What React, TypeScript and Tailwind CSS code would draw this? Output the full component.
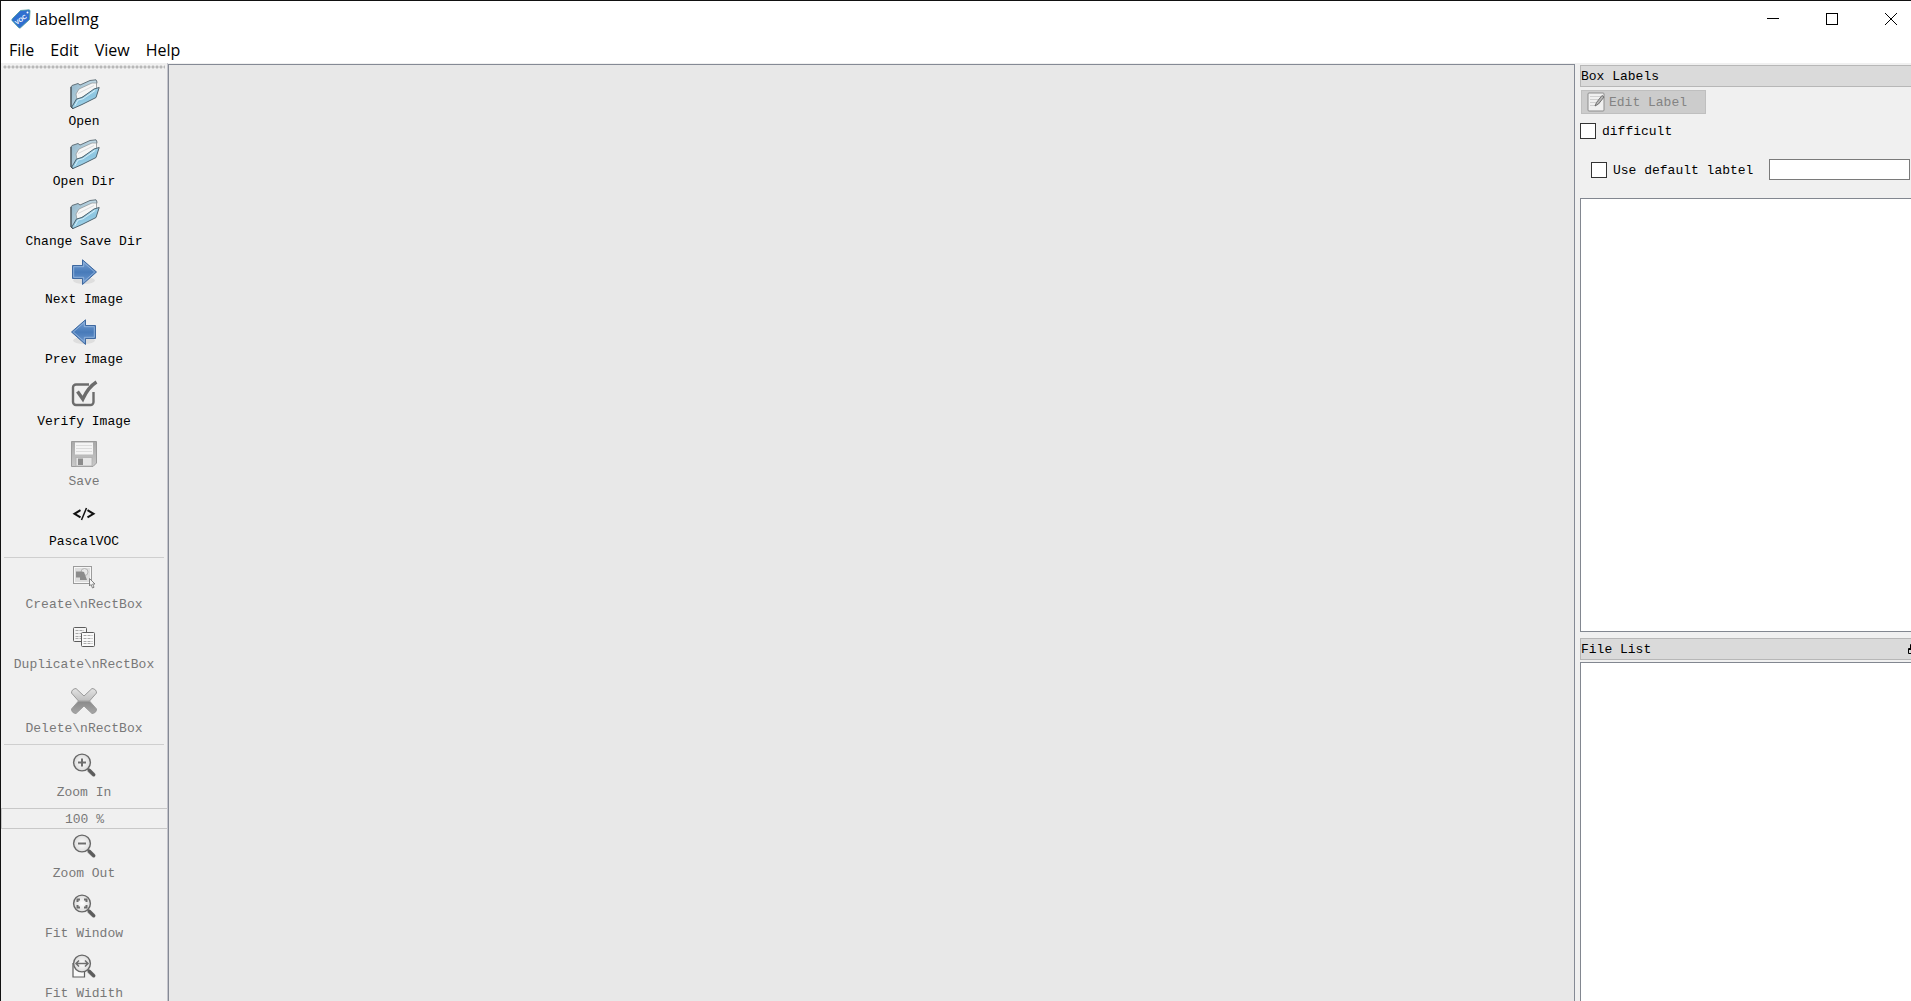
import type { ReactNode } from "react";

type ToolItemProps = {
    label: string;
    icon: ReactNode;
    // 上の余白
    space?: string;
    disabled?: boolean;
}

function ToolItem({ label, icon, space = "pt-2.5", disabled = false }: ToolItemProps) {
    return (
        <button type="button" disabled={disabled} className={`flex w-full flex-col items-center gap-1 text-black disabled:text-[#787878] ${space}`}>
            <span className="flex h-[30px] items-center justify-center">{icon}</span>
            <span className="h-4 leading-[18px] whitespace-pre">{label}</span>
        </button>
    )
}

function Separator() {
    return <div className="mx-[3px] mt-2 h-px shrink-0 bg-[#cfcfcf]" />
}

// グラデーションはまとめてここで定義
function Gradients() {
    return (
        <svg width="0" height="0" className="absolute" aria-hidden="true">
            <defs>
                <linearGradient id="folderBack" x1="0" y1="0" x2="1" y2="0.6">
                    <stop offset="0" stopColor="#8fb4c8" />
                    <stop offset="1" stopColor="#d3e6ef" />
                </linearGradient>
                <linearGradient id="folderFront" x1="0" y1="0" x2="0.4" y2="1">
                    <stop offset="0" stopColor="#b9e3f4" />
                    <stop offset="0.6" stopColor="#8cc5e0" />
                    <stop offset="1" stopColor="#a9d8ec" />
                </linearGradient>
                <linearGradient id="arrow" x1="0" y1="0" x2="0" y2="1">
                    <stop offset="0" stopColor="#7ba3d4" />
                    <stop offset="0.5" stopColor="#477ab9" />
                    <stop offset="1" stopColor="#739dd2" />
                </linearGradient>
                <linearGradient id="cross" x1="0" y1="0" x2="0" y2="1">
                    <stop offset="0" stopColor="#e4e4e4" />
                    <stop offset="0.45" stopColor="#c2c2c2" />
                    <stop offset="0.55" stopColor="#8c8c8c" />
                    <stop offset="1" stopColor="#a6a6a6" />
                </linearGradient>
                <linearGradient id="disk" x1="0" y1="0" x2="0" y2="1">
                    <stop offset="0" stopColor="#a8a8a8" />
                    <stop offset="1" stopColor="#c9c9c9" />
                </linearGradient>
                <radialGradient id="lens">
                    <stop offset="0" stopColor="#ffffff" />
                    <stop offset="1" stopColor="#dcdcdc" />
                </radialGradient>
            </defs>
        </svg>
    )
}

function FolderIcon() {
    return (
        <svg width="30" height="30" viewBox="0 0 30 30" className="ml-0.5">
            <path d="M1 8 L2 6.500 L8 4.500 L10 6 L20 1.500 L26 .8 L27 3 L24 14 L3 29.500 L1 28Z" fill="url(#folderBack)" stroke="#64727a" strokeWidth="1" />
            <path d="M6 15 L9 10 L22 4 L26.500 4 L26.500 10 L7 21Z" fill="#f6f6f6" stroke="#8b8f92" strokeWidth=".7" />
            <path d="M8 14.500 L24 6.500" stroke="#cfd2d4" strokeWidth=".8" />
            <path d="M1.500 28.500 L6.500 20 L12 18.500 L24 10 L29.200 8.500 L26 18.500 L12 25.500 L3 29.500Z" fill="url(#folderFront)" stroke="#4f6470" strokeWidth="1" />
            <path d="M5 26.500 L8 21 L13 19.800 L25 11.500" fill="none" stroke="#dff4fc" strokeWidth=".9" />
            <path d="M1 8 V28 L3 29.500" fill="none" stroke="#3f474c" strokeWidth="1" />
        </svg>
    )
}

function ArrowIcon({ flip = false }: { flip?: boolean }) {
    return (
        <svg width="28" height="28" viewBox="0 0 28 28" className={flip ? "-scale-x-100" : ""}>
            <ellipse cx="14" cy="22.500" rx="11" ry="3.500" fill="#dedede" />
            <path d="M2.500 7.500 H12.500 V1.800 L26.500 14 L12.500 26.500 V20.500 H2.500Z" fill="url(#arrow)" stroke="#3f69a0" />
            <path d="M3.700 8.700 H13.700 V4.400 L24.700 14 L13.700 23.700 V19.300 H3.700Z" fill="none" stroke="#94b5de" strokeWidth=".9" />
        </svg>
    )
}

function VerifyIcon() {
    return (
        <svg width="28" height="28" viewBox="0 0 28 28" fill="none" stroke="#6c6c6c">
            <path d="M19 4.500 H6 a3 3 0 0 0 -3 3 V22 a3 3 0 0 0 3 3 H20.500 a3 3 0 0 0 3 -3 V12" strokeWidth="2.400" />
            <path d="M7.500 11.500 L12.800 19 C16 12 20 6 26.500 2" strokeWidth="3.400" />
        </svg>
    )
}

function SaveIcon() {
    return (
        <svg width="28" height="28" viewBox="0 0 28 28">
            <path d="M1.500 1.500 H26.500 V23 L23 26.500 H1.500Z" fill="url(#disk)" stroke="#9b9b9b" />
            <rect x="5" y="2.500" width="18" height="12" fill="#f4f4f4" />
            <path d="M6 5.500 H22 M6 8.500 H22 M6 11.500 H22" stroke="#dcdcdc" />
            <rect x="6" y="17.500" width="16" height="8.500" fill="#e6e6e6" stroke="#b0b0b0" strokeWidth=".8" />
            <rect x="8" y="18.500" width="5" height="6.500" fill="#8c8c8c" />
        </svg>
    )
}

function CodeIcon() {
    return (
        <svg width="24" height="14" viewBox="0 0 24 14" fill="none" stroke="#111111" className="mb-px">
            <path d="M8.500 3.200 L2.500 6.800 L8.500 10.400 M15.500 3.200 L21.500 6.800 L15.500 10.400" strokeWidth="2" />
            <path d="M14.500 1 L9.500 13" strokeWidth="1.500" />
        </svg>
    )
}

function CreateIcon() {
    return (
        <svg width="24" height="24" viewBox="0 0 24 24">
            <rect x="1.500" y="1.500" width="18" height="17" fill="#f7f7f7" />
            <rect x="1.500" y="1.500" width="18" height="17" fill="none" stroke="#444444" strokeDasharray="1 1" />
            <rect x="3" y="3" width="15" height="14" fill="#dedede" />
            <circle cx="12.500" cy="7" r="3.500" fill="#e8e8e8" stroke="#b5b5b5" />
            <path d="M4 6.500 H10 L12 7 L15 15 H8 V12.500 H4Z" fill="#8c8c8c" />
            <path d="M17.500 13.500 V21 L19 19.500 L20.500 23 L22 22.300 L20.700 19 H23Z" fill="#f4f4f4" stroke="#777777" strokeWidth=".9" />
        </svg>
    )
}

function CopyIcon() {
    return (
        <svg width="24" height="22" viewBox="0 0 24 22" stroke="#5c5c5c">
            <rect x="1.500" y="1.500" width="13" height="14" rx="1" fill="#f4f4f4" />
            <path d="M3.500 4.500 H12 M3.500 7.500 H9 M3.500 10.500 H9 M3.500 12.500 H9" stroke="#aaaaaa" strokeDasharray="3 1" />
            <rect x="9.500" y="6.500" width="13" height="14" rx="1" fill="#fafafa" />
            <path d="M11.500 9.500 H20.500 M11.500 12.500 H20.500 M11.500 15.500 H20.500 M11.500 17.500 H20.500" stroke="#aaaaaa" strokeDasharray="3 1" />
        </svg>
    )
}

function DeleteIcon() {
    return (
        <svg width="28" height="28" viewBox="0 0 28 28">
            <path d="M6 1.500 L14 9 L22 1.500 Q26.500 2 26.500 6 L19.500 14 L26.500 22 Q26.500 26 22 26.500 L14 19 L6 26.500 Q1.500 26 1.500 22 L8.500 14 L1.500 6 Q1.500 2 6 1.500Z" fill="url(#cross)" stroke="#9a9a9a" />
        </svg>
    )
}

function LensIcon({ children, page = false }: { children: ReactNode; page?: boolean }) {
    return (
        <svg width="24" height="24" viewBox="0 0 24 24" fill="none">
            {page && <path d="M1 9 V23 H12.500 V14" fill="#fafafa" stroke="#5e5e5e" strokeWidth="1.200" />}
            <path d="M16 16.500 L22 22" stroke="#b5b5b5" strokeWidth="4" />
            <path d="M15.500 15.500 L17.500 17.500" stroke="#777777" strokeWidth="2" />
            <path d="M17.500 17.500 L21.800 21.800" stroke="#5c5c5c" strokeWidth="3.200" strokeLinecap="round" />
            <circle cx="10" cy="9.500" r="8.400" fill="url(#lens)" stroke="#686868" strokeWidth="1.400" />
            {children}
        </svg>
    )
}

function EditIcon() {
    return (
        <svg width="18" height="20" viewBox="0 0 18 20">
            <rect x="1" y="1" width="16" height="18" rx="1" fill="#f0f0f0" stroke="#8e8e8e" />
            <path d="M3 4.500 H14 M3 7.500 H12 M3 10.500 H9 M3 13.500 H8" stroke="#d0d0d0" />
            <path d="M8 14 L9.500 10.500 L15 3.500 L17 5 L11.500 12Z" fill="#b5b5b5" stroke="#666666" strokeWidth=".9" />
        </svg>
    )
}

function TagIcon() {
    return (
        <svg width="20" height="20" viewBox="0 0 20 20">
            <path d="M9.500 1.500 L18 .8 Q19 .8 19 2 L18.500 10.500 L9.500 18.800 Q8.500 19.500 7.500 18.500 L1 11.500 Q.5 10.500 1.500 9.500Z" fill="#2f6fd0" stroke="#4a9a9c" strokeWidth=".8" />
            <circle cx="16.500" cy="3.500" r="1" fill="#ffffff" />
            <text x="9.500" y="12.500" textAnchor="middle" fontSize="6" fontWeight="700" fontFamily="Liberation Sans, sans-serif" fill="#ffffff" transform="rotate(-35 10 10)">VOC</text>
        </svg>
    )
}

function DockTitle({ title, children }: { title: string; children?: ReactNode }) {
    return (
        <div className="flex h-[22px] shrink-0 items-center justify-between border border-r-0 border-[#b7b7b7] bg-[#dadada]">
            <h2 className="pt-0.5">{title}</h2>
            {children}
        </div>
    )
}

const checkStyle = "size-4 appearance-none border border-[#333333] bg-white checked:bg-[#333333]";

export default function App() {
    return (
        <div className="flex min-h-screen flex-col overflow-hidden border-t border-l border-[#111111] bg-[#f0f0f0] font-['Liberation_Mono','Noto_Sans_CJK_SC',monospace] text-[13px] leading-4 text-black">
            <Gradients />
            {/* タイトルバー */}
            <header className="flex h-9 items-center justify-between bg-white pl-2.5 font-['Open_Sans','Noto_Sans',sans-serif] text-base">
                <div className="flex items-center gap-1">
                    <TagIcon />
                    <h1>labelImg</h1>
                </div>
                <div className="flex items-center gap-[47px] pr-3.5">
                    <button type="button" aria-label="Minimize">
                        <svg width="12" height="12" viewBox="0 0 12 12" stroke="#000000"><path d="M0 5.500 H12" /></svg>
                    </button>
                    <button type="button" aria-label="Maximize">
                        <svg width="12" height="12" viewBox="0 0 12 12" fill="none" stroke="#000000"><rect x=".5" y=".5" width="11" height="11" /></svg>
                    </button>
                    <button type="button" aria-label="Close">
                        <svg width="12" height="12" viewBox="0 0 12 12" stroke="#000000"><path d="M0 0 L12 12 M12 0 L0 12" /></svg>
                    </button>
                </div>
            </header>
            {/* メニュー */}
            <nav className="flex h-[26px] items-center gap-4 bg-white pl-2 font-['Open_Sans','Noto_Sans',sans-serif] text-base">
                <button type="button">File</button>
                <button type="button">Edit</button>
                <button type="button">View</button>
                <button type="button">Help</button>
            </nav>

            <div className="flex grow">
                {/* ツールバー */}
                <aside className="flex w-[167px] shrink-0 flex-col border-r border-[#c4c4cc]">
                    <div className="mx-0.5 mt-0.5 h-1 shrink-0 bg-[radial-gradient(circle,#b8b8b8_1px,transparent_2px)] bg-size-[4px_4px]" />
                    <ToolItem label="Open" icon={<FolderIcon />} />
                    <ToolItem label="Open Dir" icon={<FolderIcon />} />
                    <ToolItem label="Change Save Dir" icon={<FolderIcon />} />
                    <ToolItem label="Next Image" icon={<ArrowIcon />} space="pt-2" />
                    <ToolItem label="Prev Image" icon={<ArrowIcon flip />} />
                    <ToolItem label="Verify Image" icon={<VerifyIcon />} space="pt-3" />
                    <ToolItem label="Save" icon={<SaveIcon />} disabled />
                    <ToolItem label="PascalVOC" icon={<CodeIcon />} />
                    <Separator />
                    <ToolItem label={"Create\\nRectBox"} icon={<CreateIcon />} space="pt-1" disabled />
                    <ToolItem label={"Duplicate\\nRectBox"} icon={<CopyIcon />} space="pt-2.5" disabled />
                    <ToolItem label={"Delete\\nRectBox"} icon={<DeleteIcon />} space="pt-3.5" disabled />
                    <Separator />
                    <ToolItem label="Zoom In" icon={<LensIcon><path d="M6 9.500 H14 M10 5.500 V13.500" stroke="#6e6e6e" strokeWidth="2" /></LensIcon>} space="pt-[5px]" disabled />
                    <input type="text" aria-label="Zoom Level" defaultValue="100 %" disabled className="mt-2 h-[21px] w-full shrink-0 border border-r-0 border-[#c8c8c8] pt-px text-center text-[#787878]" />
                    <ToolItem label="Zoom Out" icon={<LensIcon><path d="M6 9.500 H14" stroke="#6e6e6e" strokeWidth="2" /></LensIcon>} space="pt-0.5" disabled />
                    <ToolItem label="Fit Window" icon={<LensIcon><path d="M5.500 8 V5.500 H8 M12 5.500 H14.500 V8 M14.500 11 V13.500 H12 M8 13.500 H5.500 V11" stroke="#6e6e6e" strokeWidth="2" /></LensIcon>} disabled />
                    <ToolItem label="Fit Widith" icon={<LensIcon page><path d="M4 9.500 H16 M7 6.500 L4 9.500 L7 12.500 M13 6.500 L16 9.500 L13 12.500" stroke="#6e6e6e" strokeWidth="1.500" /></LensIcon>} disabled />
                </aside>

                <main className="mt-px grow border border-b-0 border-[#858a95] bg-[#e8e8e8]" />

                <aside className="flex w-[336px] shrink-0 flex-col pt-0.5 pl-[5px]">
                    {/* Box Labels */}
                    <DockTitle title="Box Labels" />
                    <button type="button" disabled className="mt-[3px] ml-px flex h-6 w-[125px] shrink-0 items-center gap-1 border border-[#bfbfbf] bg-[#cccccc] pl-[5px] text-[#838383]">
                        <EditIcon />
                        <span className="pt-0.5">Edit Label</span>
                    </button>
                    <label className="mt-[9px] flex items-center gap-1.5">
                        <input type="checkbox" className={checkStyle} />
                        <span className="h-4 leading-[18px]">difficult</span>
                    </label>
                    <div className="mt-5 flex h-[21px] items-center justify-between pr-px pl-[11px]">
                        <label className="flex items-center gap-1.5">
                            <input type="checkbox" className={checkStyle} />
                            <span className="h-4 leading-[18px]">Use default labtel</span>
                        </label>
                        <input type="text" aria-label="Default label" className="h-[21px] w-[141px] border border-[#7a7a7a] bg-white px-1" />
                    </div>
                    <div className="mt-[18px] flex-[434] border border-r-0 border-[#828790] bg-white" />

                    {/* File List */}
                    <div className="mt-1.5 flex flex-col">
                        <DockTitle title="File List">
                            <button type="button" aria-label="Float" className="h-2.5 w-[3px] overflow-hidden">
                                <svg width="10" height="10" viewBox="0 0 10 10" fill="none" stroke="#000000">
                                    <path d="M.5 4.500 H6.500 V9.500 H.5Z M2.500 4 V.5 H9.500 V6.500 H7 M.5 5.500 H6.500" />
                                </svg>
                            </button>
                        </DockTitle>
                    </div>
                    <div className="mt-0.5 flex-[339] border border-r-0 border-b-0 border-[#828790] bg-white" />
                </aside>
            </div>
        </div>
    )
}
